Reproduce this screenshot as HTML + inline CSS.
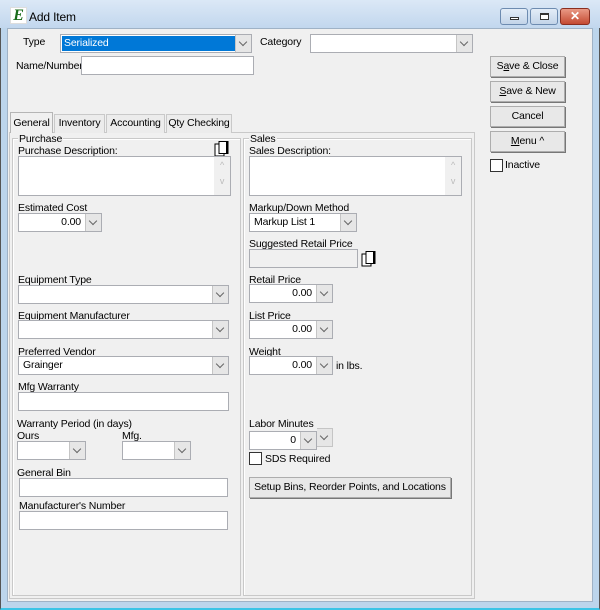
<!DOCTYPE html>
<html><head><style>
*{box-sizing:border-box}
body{margin:0;width:600px;height:610px;overflow:hidden;font-family:"Liberation Sans",sans-serif;font-size:10.5px;letter-spacing:-0.15px;white-space:nowrap;color:#000;background:#bcd5ec}
.a{position:absolute}
.win{position:absolute;left:0;top:0;width:600px;height:610px;border:1px solid #555;border-bottom:2px solid #3cc4e6;background:#bcd5ec}
.body{position:absolute;left:7px;top:28px;width:586px;height:574px;background:#f0f0f0;border:1px solid #9fb2c6}
.lbl{position:absolute;white-space:nowrap;line-height:12px}
.inp{position:absolute;background:#fff;border:1px solid #abadb3;height:19px}
.cb{position:absolute;background:#fff;border:1px solid #abadb3;height:19px}
.dd{position:absolute;right:0;top:0;bottom:0;width:16px;background:#e6e6e6;border-left:1px solid #c5c5c5}
.dd:after{content:"";position:absolute;left:4px;top:4px;width:5px;height:5px;border-right:1px solid #666;border-bottom:1px solid #666;transform:rotate(45deg)}
.val{position:absolute;top:2px;line-height:13px}
.btn{position:absolute;background:#e8e8e8;border:1px solid #adadad;box-shadow:1px 1px 0 #777;text-align:center;line-height:19px;height:21px;white-space:nowrap}
.chk{position:absolute;width:13px;height:13px;border:1px solid #333;background:#fff}
.tab{position:absolute;top:114px;height:19px;border:1px solid #c9c9c9;border-bottom:none;background:#ececec;text-align:center;line-height:17px;white-space:nowrap;overflow:hidden}
.copy{position:absolute;width:15px;height:16px}
</style></head><body>
<div class="win"></div>
<div class="a" style="left:0;top:0;width:600px;height:28px;background:linear-gradient(#dbe8f6,#c2d7ee)"></div>
<div class="a" style="left:10px;top:7px;width:17px;height:17px;background:#fff;border:1px solid #ddd;font:italic bold 16px 'Liberation Serif',serif;color:#1a6b1a;text-align:center;line-height:16px">E</div>
<div class="lbl" style="left:29px;top:11px;font-size:12px">Add Item</div>
<div class="a" style="left:500px;top:8px;width:28px;height:17px;border:1px solid #6d8bb0;border-radius:3px;background:linear-gradient(#e3edf8,#c3d4e8)"><div class="a" style="left:9px;top:8px;width:9px;height:3px;background:#fff;border:1px solid #333"></div></div>
<div class="a" style="left:530px;top:8px;width:28px;height:17px;border:1px solid #6d8bb0;border-radius:3px;background:linear-gradient(#e3edf8,#c3d4e8)"><div class="a" style="left:9px;top:4px;width:9px;height:7px;background:#fff;border:1px solid #333;border-top-width:2px"></div></div>
<div class="a" style="left:560px;top:8px;width:30px;height:17px;border:1px solid #8a2e20;border-radius:3px;background:linear-gradient(#e99a86,#c44a32);color:#fff;font-weight:bold;text-align:center;line-height:15px;font-size:12px">✕</div>
<div class="body"></div>

<div class="lbl" style="left:23px;top:36px">Type</div>
<div class="cb" style="left:60px;top:34px;width:192px"><div class="a" style="left:1px;top:1px;width:174px;height:15px;background:#0078d7;color:#fff;padding-left:2px;line-height:15px">Serialized</div><div class="dd"></div></div>
<div class="lbl" style="left:260px;top:36px">Category</div>
<div class="cb" style="left:310px;top:34px;width:163px"><div class="dd"></div></div>
<div class="lbl" style="left:16px;top:60px">Name/Number</div>
<div class="inp" style="left:81px;top:56px;width:173px"></div>

<div class="btn" style="left:490px;top:56px;width:75px">S<u>a</u>ve &amp; Close</div>
<div class="btn" style="left:490px;top:81px;width:75px"><u>S</u>ave &amp; New</div>
<div class="btn" style="left:490px;top:106px;width:75px">Cancel</div>
<div class="btn" style="left:490px;top:131px;width:75px"><u>M</u>enu ^</div>
<div class="chk" style="left:490px;top:159px"></div>
<div class="lbl" style="left:505px;top:159px">Inactive</div>

<div class="a" style="left:9px;top:132px;width:466px;height:467px;border:1px solid #c9c9c9;background:#f0f0f0"></div>
<div class="tab" style="left:10px;top:112px;height:21px;width:43px;background:#f0f0f0;border-color:#b5b5b5;line-height:20px">General</div>
<div class="tab" style="left:54px;width:51px">Inventory</div>
<div class="tab" style="left:106px;width:59px">Accounting</div>
<div class="tab" style="left:166px;width:66px">Qty Checking</div>

<div class="a" style="left:12px;top:138px;width:229px;height:458px;border:1px solid #c9c9c9;box-shadow:inset 1px 1px 0 #fff"></div>
<div class="a" style="left:243px;top:138px;width:229px;height:458px;border:1px solid #c9c9c9;box-shadow:inset 1px 1px 0 #fff"></div>
<div class="lbl" style="left:18px;top:133px;background:#f0f0f0;padding:0 1px">Purchase</div>
<div class="lbl" style="left:249px;top:133px;background:#f0f0f0;padding:0 1px">Sales</div>

<div class="lbl" style="left:18px;top:145px">Purchase Description:</div>
<svg class="copy" style="left:214px;top:141px" viewBox="0 0 15 16"><rect x="1" y="3" width="9" height="12" fill="#fff" stroke="#000"/><rect x="5" y="0.5" width="9" height="12" fill="#fff" stroke="#000"/><rect x="12" y="1" width="2" height="12" fill="#000"/></svg>
<div class="inp" style="left:18px;top:156px;width:213px;height:40px"><div class="a" style="right:0;top:0;bottom:0;width:16px;background:#f0f0f0;color:#bbb;font-size:9px;text-align:center;line-height:16px">^<br>v</div></div>
<div class="lbl" style="left:18px;top:202px">Estimated Cost</div>
<div class="cb" style="left:18px;top:213px;width:84px"><div class="val" style="right:20px">0.00</div><div class="dd"></div></div>
<div class="lbl" style="left:18px;top:274px">Equipment Type</div>
<div class="cb" style="left:18px;top:285px;width:211px"><div class="dd"></div></div>
<div class="lbl" style="left:18px;top:310px">Equipment Manufacturer</div>
<div class="cb" style="left:18px;top:320px;width:211px"><div class="dd"></div></div>
<div class="lbl" style="left:18px;top:346px">Preferred Vendor</div>
<div class="cb" style="left:18px;top:356px;width:211px"><div class="val" style="left:4px">Grainger</div><div class="dd"></div></div>
<div class="lbl" style="left:18px;top:381px">Mfg Warranty</div>
<div class="inp" style="left:18px;top:392px;width:211px"></div>
<div class="lbl" style="left:17px;top:418px">Warranty Period (in days)</div>
<div class="lbl" style="left:17px;top:430px">Ours</div>
<div class="lbl" style="left:122px;top:430px">Mfg.</div>
<div class="cb" style="left:17px;top:441px;width:69px"><div class="dd"></div></div>
<div class="cb" style="left:122px;top:441px;width:69px"><div class="dd"></div></div>
<div class="lbl" style="left:17px;top:467px">General Bin</div>
<div class="inp" style="left:19px;top:478px;width:209px"></div>
<div class="lbl" style="left:19px;top:500px">Manufacturer's Number</div>
<div class="inp" style="left:19px;top:511px;width:209px"></div>

<div class="lbl" style="left:249px;top:145px">Sales Description:</div>
<div class="inp" style="left:249px;top:156px;width:213px;height:40px"><div class="a" style="right:0;top:0;bottom:0;width:16px;background:#f0f0f0;color:#bbb;font-size:9px;text-align:center;line-height:16px">^<br>v</div></div>
<div class="lbl" style="left:249px;top:202px">Markup/Down Method</div>
<div class="cb" style="left:249px;top:213px;width:108px"><div class="val" style="left:4px">Markup List 1</div><div class="dd"></div></div>
<div class="lbl" style="left:249px;top:238px">Suggested Retail Price</div>
<div class="a" style="left:249px;top:249px;width:109px;height:19px;border:1px solid #abadb3;background:#f0f0f0"></div>
<svg class="copy" style="left:361px;top:251px" viewBox="0 0 15 16"><rect x="1" y="3" width="9" height="12" fill="#fff" stroke="#000"/><rect x="5" y="0.5" width="9" height="12" fill="#fff" stroke="#000"/><rect x="12" y="1" width="2" height="12" fill="#000"/></svg>
<div class="lbl" style="left:249px;top:274px">Retail Price</div>
<div class="cb" style="left:249px;top:284px;width:84px"><div class="val" style="right:20px">0.00</div><div class="dd"></div></div>
<div class="lbl" style="left:249px;top:310px">List Price</div>
<div class="cb" style="left:249px;top:320px;width:84px"><div class="val" style="right:20px">0.00</div><div class="dd"></div></div>
<div class="lbl" style="left:249px;top:346px">Weight</div>
<div class="cb" style="left:249px;top:356px;width:84px"><div class="val" style="right:20px">0.00</div><div class="dd"></div></div>
<div class="lbl" style="left:336px;top:360px">in lbs.</div>
<div class="lbl" style="left:249px;top:418px">Labor Minutes</div>
<div class="cb" style="left:249px;top:431px;width:68px"><div class="val" style="right:20px">0</div><div class="dd"></div></div>
<div class="cb" style="left:317px;top:428px;width:16px;border-color:#c5c5c5"><div class="dd" style="width:15px;border-left:none"></div></div>
<div class="chk" style="left:249px;top:452px"></div>
<div class="lbl" style="left:265px;top:453px">SDS Required</div>
<div class="btn" style="left:249px;top:477px;width:202px">Setup Bins, Reorder Points, and Locations</div>
</body></html>
